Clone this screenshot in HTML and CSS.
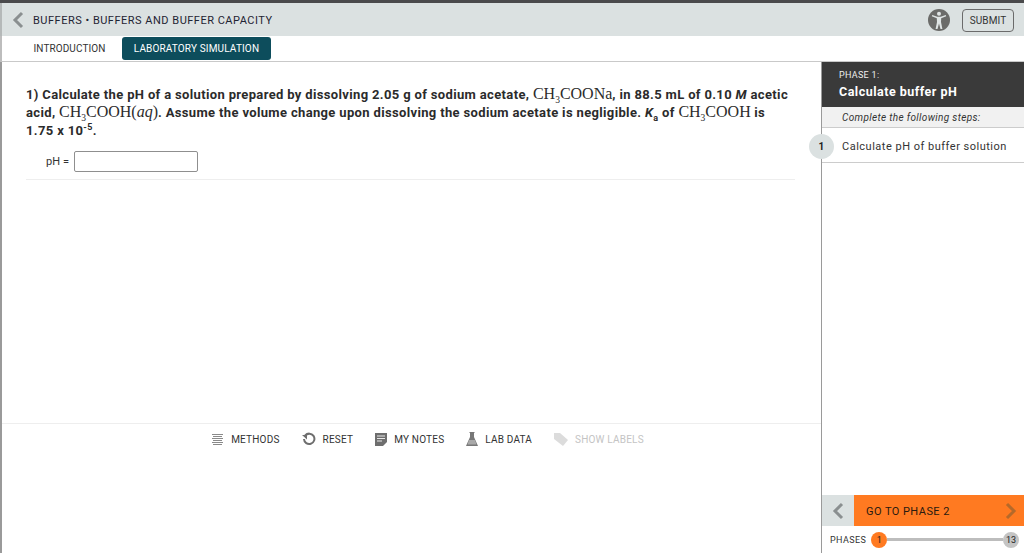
FILE: index.html
```html
<!DOCTYPE html>
<html lang="en">
<head>
<meta charset="utf-8">
<title>Buffers and Buffer Capacity</title>
<link rel="stylesheet" href="styles.css">
</head>
<body>
<div class="app">
  <header class="topbar">
    <svg class="back" width="12" height="18" viewBox="0 0 12 18"><path d="M10 2 3 9l7 7" fill="none" stroke="#8a8f90" stroke-width="3"/></svg>
    <div class="title">BUFFERS • BUFFERS AND BUFFER CAPACITY</div>
    <svg class="access" width="22" height="22" viewBox="0 0 22 22">
      <circle cx="11" cy="11" r="11" fill="#6b6b69"/>
      <circle cx="11" cy="4.800" r="2" fill="#dfe4e4"/>
      <path d="M3.800 7.300 8.800 9.200 9 13 7.600 20h1.900L11 14.500 12.500 20h1.900L13 13l.2-3.800 5-1.900-.5-1.300-5 1.700H9.300l-5-1.700z" fill="#dfe4e4"/>
    </svg>
    <button class="submit">SUBMIT</button>
  </header>
  <nav class="tabs">
    <div class="tab">INTRODUCTION</div>
    <div class="tab tab-active">LABORATORY SIMULATION</div>
  </nav>
  <div class="body">
    <main class="left">
      <section class="question">
        <p class="qtext">1) Calculate the pH of a solution prepared by dissolving 2.05 g of sodium acetate, <span class="math">CH<sub>3</sub>COONa</span>, in 88.5 mL of 0.10 <i>M</i> acetic acid, <span class="math">CH<sub>3</sub>COOH(<i>aq</i>)</span>. Assume the volume change upon dissolving the sodium acetate is negligible. <i>K</i><sub class="ka">a</sub> of <span class="math">CH<sub>3</sub>COOH</span> is 1.75 x 10<sup>-5</sup>.</p>
        <div class="answer">
          <label class="answer-label" for="ph">pH =</label>
          <input class="answer-input" id="ph" type="text">
        </div>
      </section>
      <footer class="tools">
        <div class="tool">
          <svg width="13" height="13" viewBox="0 0 13 13"><path d="M1 1.500h11M2 3.500h9M1 5.500h11M2 7.500h9M1 9.500h11M2 11.500h9" stroke="#8a8a8a" stroke-width="1" fill="none"/></svg>
          <span>METHODS</span>
        </div>
        <div class="tool">
          <svg width="14" height="14" viewBox="0 0 14 14"><path d="M3.200 3.500A5.200 5.200 0 1 1 2 7" fill="none" stroke="#6e6e6e" stroke-width="2"/><path d="M0 3h5v4.500z" fill="#6e6e6e"/></svg>
          <span>RESET</span>
        </div>
        <div class="tool">
          <svg width="12" height="13" viewBox="0 0 12 13"><path d="M0 0h12v9l-4 4H0z" fill="#6e6e6e"/><path d="M2 3h8M2 5.500h8M2 8h5" stroke="#e8e8e8" stroke-width="1"/></svg>
          <span>MY NOTES</span>
        </div>
        <div class="tool">
          <svg width="12" height="14" viewBox="0 0 12 14"><path d="M3.500 0h5v1H8v4l4 9H0l4-9V1h-.5z" fill="#777"/><path d="M3 8h6l1.500 4.500h-9z" fill="#a9a9a9"/></svg>
          <span>LAB DATA</span>
        </div>
        <div class="tool tool-off">
          <svg width="14" height="13" viewBox="0 0 14 13"><path d="M0 0h6l8 7-5 6-9-7z" fill="#dcdcdc"/></svg>
          <span>SHOW LABELS</span>
        </div>
      </footer>
    </main>
    <aside class="side">
      <div class="phase">
        <div class="phase-num">PHASE 1:</div>
        <div class="phase-name">Calculate buffer pH</div>
      </div>
      <div class="instr">Complete the following steps:</div>
      <div class="step">
        <span class="step-badge">1</span>
        <span>Calculate pH of buffer solution</span>
      </div>
      <div class="spacer"></div>
      <div class="go">
        <div class="go-prev"><svg width="12" height="18" viewBox="0 0 12 18"><path d="M10 2 3 9l7 7" fill="none" stroke="#8a8f90" stroke-width="3"/></svg></div>
        <div class="go-next">
          <span>GO TO PHASE 2</span>
          <svg width="12" height="18" viewBox="0 0 12 18"><path d="M2 2l7 7-7 7" fill="none" stroke="#b5692a" stroke-width="3"/></svg>
        </div>
      </div>
      <div class="progress">
        <span class="progress-label">PHASES</span>
        <div class="track">
          <span class="dot dot-on">1</span>
          <span class="line"></span>
          <span class="dot dot-end">13</span>
        </div>
      </div>
    </aside>
  </div>
</div>
</body>
</html>
```

FILE: styles.css
```css
* { box-sizing: border-box; }
html, body { margin: 0; height: 100%; }
body { font-family: Roboto, "Liberation Sans", sans-serif; color: #222; background: #fff; overflow: hidden; }
.app { height: 553px; display: flex; flex-direction: column; border-top: 3px solid #4a4a4c; }
.topbar { height: 33px; background: #dbe1e1; display: flex; align-items: center; padding: 1px 10px 0 10px; flex: none; border-left: 2px solid #b5b9b9; }
.back { flex: none; }
.title { margin-left: 9px; font-size: 11px; letter-spacing: .5px; color: #1f2433; flex: 1; }
.access { flex: none; margin-right: 12px; }
.submit { width: 52px; height: 23px; padding: 0; background: transparent; border: 1px solid #6b6b6b; border-radius: 4px; font: 10px Roboto, sans-serif; letter-spacing: .1px; color: #333; }
.tabs { height: 26px; flex: none; display: flex; align-items: stretch; padding: 1px 0 1px 19px; border-bottom: 1px solid #c9c9c9; border-left: 2px solid #bdbdbd; }
.tab { width: 97px; margin-right: 4px; display: flex; align-items: center; justify-content: center; font-size: 10px; letter-spacing: .1px; color: #333; }
.tab-active { width: 149px; background: #0d4d5c; color: #fff; border-radius: 3px; letter-spacing: .15px; }
.body { flex: 1; display: flex; min-height: 0; }
.left { width: 822px; display: flex; flex-direction: column; border-left: 2px solid #9a9a9a; border-right: 1px solid #9a9a9a; }
.question { flex: 1; padding: 24px 26px 0 24px; }
.qtext { margin: 0; width: 766px; font-size: 13px; font-weight: 700; line-height: 18px; letter-spacing: .35px; color: #2b2b2b; }
.math { font-family: "Liberation Serif", serif; font-weight: 400; font-size: 16px; letter-spacing: 0; line-height: 1; }
.math sub { font-size: 9.5px; line-height: 0; }
.ka { font-size: 9px; line-height: 0; }
.qtext sup { font-size: 9px; line-height: 0; }
.answer { margin-top: 11px; padding: 0 0 7px 20px; display: flex; align-items: center; gap: 5px; border-bottom: 1px solid #eee; height: 29px; }
.answer-label { font-size: 11px; letter-spacing: .1px; color: #333; }
.answer-input { width: 124px; height: 21px; border: 1px solid #8f8f8f; border-radius: 2px; background: #fff; padding: 0; }
.tools { height: 130px; flex: none; border-top: 1px solid #eee; display: flex; justify-content: center; align-items: flex-start; gap: 22px; padding: 8px 0 0 32px; }
.tool { display: flex; align-items: center; gap: 7px; height: 14px; font-size: 10px; letter-spacing: .2px; color: #333; }
.tool-off { color: #c4c4c4; }
.side { flex: 1; display: flex; flex-direction: column; min-width: 0; }
.phase { height: 45px; flex: none; background: #3a3a3a; color: #fff; padding: 8px 0 0 17px; }
.phase-num { font-size: 9px; letter-spacing: .3px; line-height: 11px; color: #eee; }
.phase-name { font-size: 12.5px; font-weight: 700; letter-spacing: .5px; margin-top: 3px; line-height: 15px; }
.instr { height: 21px; flex: none; background: #f1f1f1; border-bottom: 1px solid #ccc; padding-left: 20px; font-size: 10px; font-style: italic; line-height: 21px; letter-spacing: .35px; color: #333; }
.step { height: 35px; flex: none; display: flex; align-items: center; gap: 8px; padding-top: 2px; border-bottom: 1px solid #ccc; font-size: 11px; letter-spacing: .5px; color: #333; }
.step-badge { width: 25px; height: 25px; flex: none; margin-left: -13px; border-radius: 50%; background: #dbe1e1; font-size: 10px; font-weight: 700; display: flex; align-items: center; justify-content: center; color: #222; position: relative; }
.spacer { flex: 1; }
.go { height: 31px; flex: none; display: flex; }
.go-prev { width: 32px; background: #dbe1e1; display: flex; align-items: center; justify-content: center; }
.go-next { flex: 1; background: #ff7a21; display: flex; align-items: center; justify-content: space-between; padding: 1px 7px 0 12px; font-size: 11px; letter-spacing: .45px; color: #2a1a10; }
.progress { height: 27px; flex: none; display: flex; align-items: center; padding: 0 5px 0 8px; gap: 5px; }
.progress-label { font-size: 9px; letter-spacing: .4px; color: #333; }
.track { flex: 1; display: flex; align-items: center; }
.line { flex: 1; height: 3px; background: #bdbdbd; }
.dot { width: 16px; height: 16px; border-radius: 50%; display: flex; align-items: center; justify-content: center; font-size: 9px; color: #222; flex: none; }
.dot-on { background: #ff7a21; }
.dot-end { background: #c4c4c4; }
```
